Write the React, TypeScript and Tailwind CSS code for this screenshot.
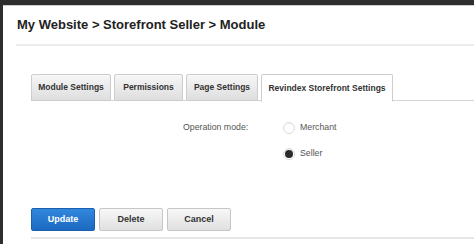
import { useState } from "react";

const tabs = [
  { label: "Module Settings", w: "w-[80px]" },
  { label: "Permissions", w: "w-[69px]" },
  { label: "Page Settings", w: "w-[72px]" },
  { label: "Revindex Storefront Settings", w: "w-[132px]" },
];

function Radio({ checked, label, onClick }: { checked: boolean; label: string; onClick: () => void }) {
  return (
    <button onClick={onClick} className="flex items-center h-[14px]">
      <span className="w-[12px] h-[12px] rounded-full border border-[#dcdcdc] bg-white flex items-center justify-center shadow-[inset_0_1px_1px_rgba(0,0,0,0.06)]">
        {checked && <span className="w-[8px] h-[8px] rounded-full bg-[#2b2b2b]" />}
      </span>
      <span className="ml-[5px] text-[8.75px] text-[#555]">{label}</span>
    </button>
  );
}

export default function App() {
  const [active, setActive] = useState(3);
  const [mode, setMode] = useState<"merchant" | "seller">("seller");

  return (
    <div className="w-[474px] h-[244px] bg-[#2e2e2e] pt-[5px] pl-[3px] overflow-hidden font-['Liberation_Sans',Arial,sans-serif]">
      <div className="h-full bg-white border-t border-[#cfcfcf]">
        <h1 className="ml-[14px] mt-[11px] text-[13px] leading-[16px] font-bold text-[#222]">
          My Website &gt; Storefront Seller &gt; Module
        </h1>
        <div className="ml-[13px] mt-[11px] h-[2px] bg-[#ececec]" />

        <div className="ml-[28px] mt-[28px]">
          <div className="flex gap-[3px] border-b border-[#d4d4d4] h-[27px]">
            {tabs.map((t, i) => (
              <button
                key={t.label}
                onClick={() => setActive(i)}
                className={`${t.w} h-[27px] rounded-t-[2px] border border-[#cdcdcd] text-[8.5px] font-bold text-[#333] ${
                  i === active
                    ? "bg-white border-b-white h-[28px]"
                    : "bg-gradient-to-b from-[#f6f6f6] to-[#dedede]"
                }`}
              >
                {t.label}
              </button>
            ))}
          </div>

          <div className="flex mt-[20px]">
            <div className="ml-[152px] w-[100px] text-[8.75px] text-[#555] leading-[12px]">Operation mode:</div>
            <div className="flex flex-col gap-[12px]">
              <Radio checked={mode === "merchant"} label="Merchant" onClick={() => setMode("merchant")} />
              <Radio checked={mode === "seller"} label="Seller" onClick={() => setMode("seller")} />
            </div>
          </div>

          <div className="flex gap-[4px] mt-[47px]">
            <button className="w-[64px] h-[23px] rounded-[2px] border border-[#1b5fae] bg-gradient-to-b from-[#3188dc] to-[#1c69c2] text-white text-[9px] font-bold">
              Update
            </button>
            <button className="w-[64px] h-[23px] rounded-[2px] border border-[#c6c6c6] bg-gradient-to-b from-[#f8f8f8] to-[#e0e0e0] text-[#333] text-[9px] font-bold">
              Delete
            </button>
            <button className="w-[64px] h-[23px] rounded-[2px] border border-[#c6c6c6] bg-gradient-to-b from-[#f8f8f8] to-[#e0e0e0] text-[#333] text-[9px] font-bold">
              Cancel
            </button>
          </div>
          <div className="mt-[6px] h-[2px] bg-[#e6e6e6]" />
        </div>
      </div>
    </div>
  );
}
